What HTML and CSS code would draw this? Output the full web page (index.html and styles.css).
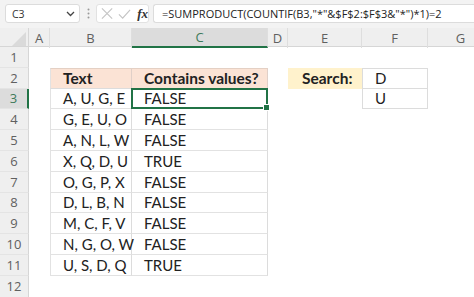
FILE: index.html
```html
<!DOCTYPE html>
<html lang="en">
<head>
  <meta charset="UTF-8" />
  <title>Contains values</title>
  <link rel="stylesheet" href="styles.css">
</head>
<body>

  <!-- FORMULA BAR -->
  <div class="formula-bar">
    <div class="name-box">
      <span>C3</span>
      <svg class="chevron" width="9" height="6" viewBox="0 0 9 6"><path d="M1 1l3.5 3.5L8 1" fill="none" stroke="#444" stroke-width="1.3"/></svg>
    </div>
    <svg class="grip" width="3" height="11" viewBox="0 0 3 11"><circle cx="1.5" cy="1.5" r="1" fill="#999"/><circle cx="1.5" cy="5.5" r="1" fill="#999"/><circle cx="1.5" cy="9.5" r="1" fill="#999"/></svg>
    <div class="fx-box">
      <svg width="13" height="13" viewBox="0 0 13 13"><path d="M1 1l11 11M12 1L1 12" stroke="#c4c4c4" stroke-width="1.2"/></svg>
      <svg width="14" height="12" viewBox="0 0 14 12"><path d="M1 6.5l4 4L13 1.5" fill="none" stroke="#c4c4c4" stroke-width="1.2"/></svg>
      <span class="fx">fx</span>
    </div>
    <div class="formula">=SUMPRODUCT(COUNTIF(B3,"*"&amp;$F$2:$F$3&amp;"*")*1)=2</div>
  </div>

  <!-- SHEET -->
  <div class="sheet">
    <div class="row col-heads">
      <div class="corner"></div>
      <div class="col-head">A</div>
      <div class="col-head">B</div>
      <div class="col-head active">C</div>
      <div class="col-head">D</div>
      <div class="col-head">E</div>
      <div class="col-head">F</div>
      <div class="col-head">G</div>
    </div>

    <div class="row"><div class="row-head">1</div></div>

    <div class="row">
      <div class="row-head">2</div>
      <div class="cell b th first">Text</div>
      <div class="cell c th">Contains values?</div>
      <div class="cell e label">Search:</div>
      <div class="cell f box top">D</div>
    </div>
    <div class="row">
      <div class="row-head active">3</div>
      <div class="cell b td first">A, U, G, E</div>
      <div class="cell c td selected">FALSE</div>
      <div class="cell f box">U</div>
    </div>
    <div class="row">
      <div class="row-head">4</div>
      <div class="cell b td first">G, E, U, O</div>
      <div class="cell c td">FALSE</div>
    </div>
    <div class="row">
      <div class="row-head">5</div>
      <div class="cell b td first">A, N, L, W</div>
      <div class="cell c td">FALSE</div>
    </div>
    <div class="row">
      <div class="row-head">6</div>
      <div class="cell b td first">X, Q, D, U</div>
      <div class="cell c td">TRUE</div>
    </div>
    <div class="row">
      <div class="row-head">7</div>
      <div class="cell b td first">O, G, P, X</div>
      <div class="cell c td">FALSE</div>
    </div>
    <div class="row">
      <div class="row-head">8</div>
      <div class="cell b td first">D, L, B, N</div>
      <div class="cell c td">FALSE</div>
    </div>
    <div class="row">
      <div class="row-head">9</div>
      <div class="cell b td first">M, C, F, V</div>
      <div class="cell c td">FALSE</div>
    </div>
    <div class="row">
      <div class="row-head">10</div>
      <div class="cell b td first">N, G, O, W</div>
      <div class="cell c td">FALSE</div>
    </div>
    <div class="row">
      <div class="row-head">11</div>
      <div class="cell b td first">U, S, D, Q</div>
      <div class="cell c td">TRUE</div>
    </div>
    <div class="row last"><div class="row-head">12</div></div>
  </div>

</body>
</html>
```

FILE: styles.css
```css
* {
  box-sizing: border-box;
}
body, html {
  margin: 0;
  width: 474px;
  height: 297px;
  overflow: hidden;
  background: #fff;
  font-family: 'Lato', 'Open Sans', sans-serif;
  color: #222;
}

/* formula bar */
.formula-bar {
  height: 28px;
  background: #f3f3f3;
  display: flex;
  align-items: center;
  padding: 0 0 1px 5px;
}
.name-box {
  width: 75px;
  height: 19px;
  background: #fff;
  border: 1px solid #dcdcdc;
  border-radius: 3px;
  display: flex;
  align-items: center;
  justify-content: space-between;
  padding: 0 4px 0 6px;
  font-family: 'Open Sans', sans-serif;
  font-size: 10.5px;
  color: #333;
}
.grip {
  margin: 0 6px 0 7px;
}
.fx-box {
  width: 53px;
  height: 19px;
  background: #fff;
  border: 1px solid #e2e2e2;
  border-radius: 3px;
  display: flex;
  align-items: center;
  gap: 5px;
  padding-left: 4px;
}
.fx {
  font-family: 'Liberation Serif', serif;
  font-style: italic;
  font-weight: bold;
  font-size: 13px;
  color: #333;
  margin-left: 1px;
}
.formula {
  flex: 1;
  height: 19px;
  margin-left: 4px;
  background: #fff;
  border: 1px solid #dcdcdc;
  border-right: none;
  border-radius: 3px 0 0 3px;
  padding-left: 8px;
  font-family: 'Open Sans', sans-serif;
  font-size: 11px;
  line-height: 17px;
  color: #222;
  white-space: nowrap;
}

/* sheet grid */
.sheet {
  display: flex;
  flex-direction: column;
}
.row {
  display: grid;
  grid-template-columns: 29px 21px 82px 136px 20px 74px 66px 66px;
  height: 20.8px;
}
.col-heads {
  height: 19px;
  background: #efefef;
  border-bottom: 1px solid #d6d6d6;
}
.corner {
  position: relative;
  border-right: 1px solid #d6d6d6;
}
.corner::after {
  content: '';
  position: absolute;
  right: 2px;
  bottom: 2px;
  border-style: solid;
  border-width: 0 0 14px 14px;
  border-color: transparent transparent #dadada transparent;
}
.col-head {
  display: flex;
  align-items: center;
  justify-content: center;
  font-family: 'Open Sans', sans-serif;
  font-size: 13px;
  color: #606060;
  border-right: 1px solid #dedede;
}
.col-head.active {
  background: #dcdcdc;
  border-bottom: 2px solid #217346;
  color: #3f7a5a;
}
.row-head {
  grid-column: 1;
  display: flex;
  align-items: center;
  justify-content: center;
  background: #efefef;
  border-right: 1px solid #d6d6d6;
  border-bottom: 1px solid #e4e4e4;
  font-family: 'Open Sans', sans-serif;
  font-size: 13px;
  color: #606060;
}
.row-head.active {
  background: #dcdcdc;
  border-right: 2px solid #217346;
  color: #3f7a5a;
}
.row.last {
  height: 22px;
}

/* cells */
.cell {
  display: flex;
  align-items: center;
  padding-left: 12px;
  font-size: 15px;
  white-space: nowrap;
}
.b { grid-column: 3; }
.c { grid-column: 4; }
.e { grid-column: 6; }
.f { grid-column: 7; }

.th {
  background: #fbe3d5;
  font-weight: bold;
  font-size: 15.5px;
  border-top: 1px solid #e4d0c4;
  border-right: 1px solid #e0d0c8;
  border-bottom: 1px solid #dcdcdc;
}
.td {
  border-right: 1px solid #dcdcdc;
  border-bottom: 1px solid #e2e2e2;
}
.first {
  border-left: 1px solid #e2e2e2;
}
.label {
  background: #fff2cc;
  font-weight: bold;
  font-size: 15.5px;
  padding-left: 14px;
}
.box {
  border: 1px solid #dcdcdc;
  border-top: none;
}
.box.top {
  border-top: 1px solid #dcdcdc;
}

/* active cell */
.selected {
  position: relative;
}
.selected::after {
  content: '';
  position: absolute;
  left: -1px;
  top: -1px;
  right: -1px;
  bottom: -1px;
  border: 2px solid #217346;
}
.selected::before {
  content: '';
  position: absolute;
  right: -3px;
  bottom: -3px;
  width: 5px;
  height: 5px;
  background: #217346;
  border: 1px solid #fff;
  z-index: 1;
}
```
